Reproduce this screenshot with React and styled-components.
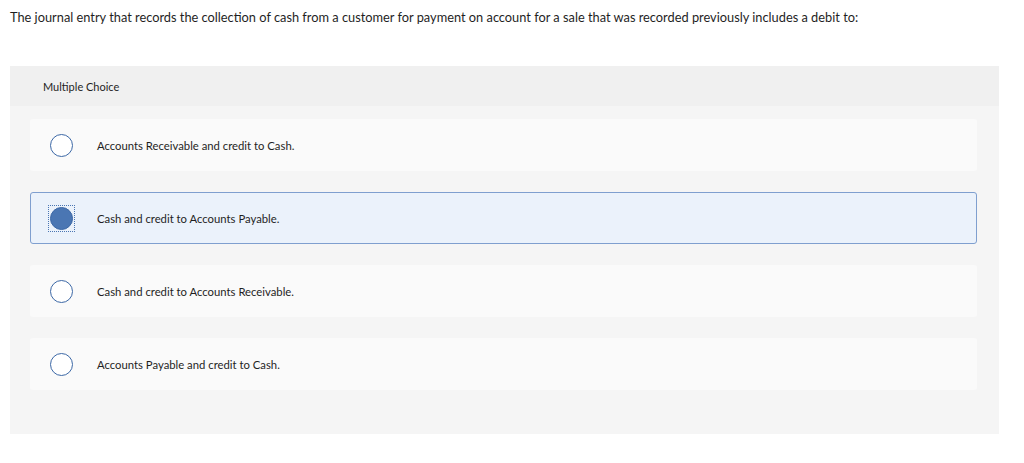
import React, { useState } from 'react';
import styled, { createGlobalStyle } from 'styled-components';

const GlobalStyle = createGlobalStyle`
  body {
    margin: 0;
    background: #ffffff;
    font-family: Lato, "Open Sans", Arial, sans-serif;
    color: #222;
  }
`;

const Page = styled.div`
  padding: 9px 10px 0 10px;
`;

const Question = styled.p`
  margin: 0;
  font-size: 12.8px;
  line-height: 17px;
  color: #1f1f1f;
`;

const Panel = styled.div`
  margin-top: 40px;
  width: 989px;
  background: #f5f5f5;
`;

const PanelHeader = styled.div`
  height: 40px;
  display: flex;
  align-items: center;
  padding-left: 33px;
  background: #f0f0f0;
  font-size: 11px;
  color: #1f1f1f;
`;

const OptionList = styled.div`
  display: flex;
  flex-direction: column;
  gap: 21px;
  padding: 13px 22px 44px 20px;
`;

const Option = styled.label`
  box-sizing: border-box;
  height: 52px;
  display: flex;
  align-items: center;
  gap: 22px;
  padding-left: 17px;
  border-radius: 3px;
  cursor: pointer;
  background: ${p => (p.selected ? '#ebf2fb' : '#fafafa')};
  border: 1px solid ${p => (p.selected ? '#7f9fcf' : 'transparent')};
  font-size: 11.3px;
  color: #1f1f1f;
`;

const RadioFocus = styled.span`
  flex: none;
  display: inline-flex;
  padding: 1px;
  border: 1px dotted ${p => (p.checked ? '#4a76b3' : 'transparent')};
`;

const Radio = styled.span`
  box-sizing: border-box;
  width: 23px;
  height: 23px;
  border-radius: 50%;
  border: 1px solid #3c68a6;
  background: ${p => (p.checked ? '#4a76b3' : '#ffffff')};
`;

const choices = [
  'Accounts Receivable and credit to Cash.',
  'Cash and credit to Accounts Payable.',
  'Cash and credit to Accounts Receivable.',
  'Accounts Payable and credit to Cash.',
];

export default function App() {
  const [selected, setSelected] = useState(1);
  return (
    <>
      <GlobalStyle />
      <Page>
        <Question>
          The journal entry that records the collection of cash from a customer for payment on account for a sale that was recorded previously includes a debit to:
        </Question>
        <Panel>
          <PanelHeader>Multiple Choice</PanelHeader>
          <OptionList>
            {choices.map((c, i) => (
              <Option key={c} selected={i === selected} onClick={() => setSelected(i)}>
                <RadioFocus checked={i === selected}>
                  <Radio checked={i === selected} />
                </RadioFocus>
                {c}
              </Option>
            ))}
          </OptionList>
        </Panel>
      </Page>
    </>
  );
}
